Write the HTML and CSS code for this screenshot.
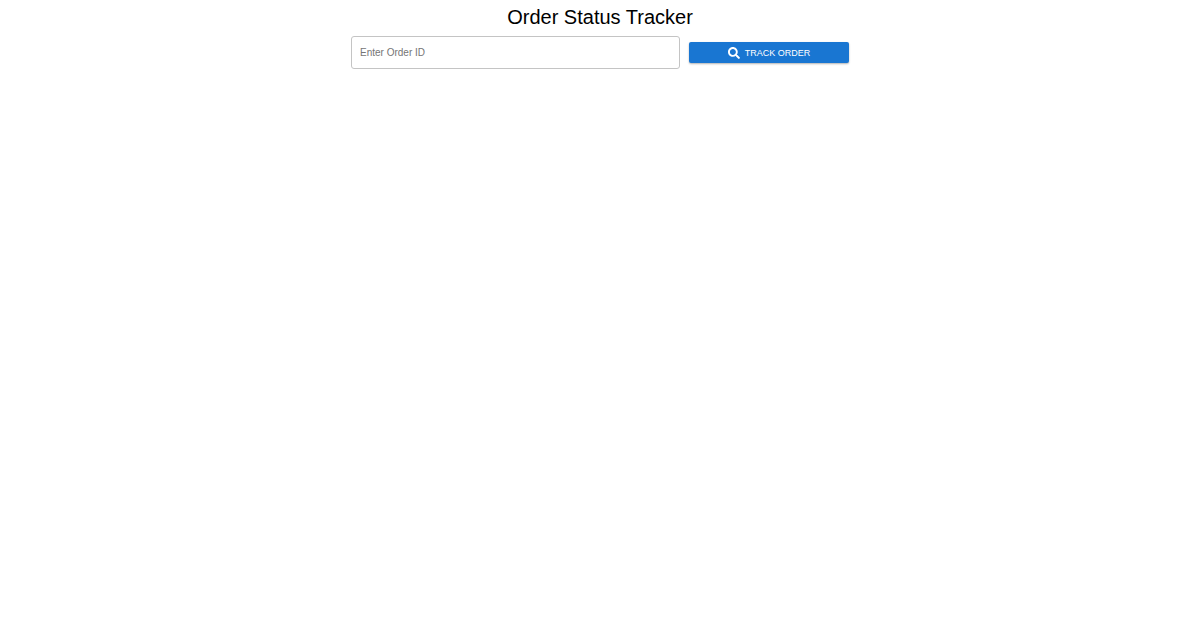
FILE: index.html
```html
<!DOCTYPE html>
<html lang="en">
<head>
<meta charset="utf-8">
<meta name="viewport" content="width=device-width, initial-scale=1">
<title>Order Status Tracker</title>
<link rel="stylesheet" href="styles.css">
</head>
<body>
<main class="tracker">
  <h1 class="tracker-title">Order Status Tracker</h1>
  <form class="tracker-form">
    <input class="order-input" type="text" placeholder="Enter Order ID" aria-label="Enter Order ID">
    <button class="track-button" type="button">
      <svg class="track-icon" viewBox="0 0 512 512" aria-hidden="true"><path fill="currentColor" d="M505 442.700L405.300 343c-4.500-4.500-10.600-7-17-7H372c27.600-35.300 44-79.700 44-128C416 93.100 322.900 0 208 0S0 93.100 0 208s93.100 208 208 208c48.300 0 92.700-16.400 128-44v16.300c0 6.400 2.500 12.500 7 17l99.700 99.700c9.400 9.400 24.600 9.400 33.900 0l28.300-28.300c9.400-9.400 9.400-24.600.1-34zM208 336c-70.700 0-128-57.200-128-128 0-70.700 57.200-128 128-128 70.700 0 128 57.200 128 128 0 70.700-57.200 128-128 128z"/></svg>
      <span>TRACK ORDER</span>
    </button>
  </form>
</main>
</body>
</html>
```
FILE: styles.css
```css
* {
  box-sizing: border-box;
}

body {
  margin: 0;
  background: #fff;
  color: #000;
  font-family: "Liberation Sans", Arial, sans-serif;
}

.tracker {
  max-width: 498px;
  margin: 0 auto;
}

.tracker-title {
  margin: 0;
  padding: 4px 0 6px;
  font-size: 20px;
  font-weight: 400;
  line-height: 26px;
  text-align: center;
}

.tracker-form {
  display: grid;
  grid-template-columns: 329fr 160fr;
  align-items: center;
  gap: 9px;
}

.order-input {
  width: 100%;
  height: 33px;
  padding: 0 8px;
  border: 1px solid #c4c4c4;
  border-radius: 3px;
  background: #fff;
  color: #212121;
  font: 10px/14px "Liberation Sans", Arial, sans-serif;
}

.order-input::placeholder {
  color: #757575;
}

.track-button {
  display: flex;
  align-items: center;
  justify-content: center;
  gap: 5px;
  height: 21px;
  padding: 0 10px;
  border: 0;
  border-radius: 2px;
  background: #1976d2;
  color: #fff;
  font: 9px/14px "Liberation Sans", Arial, sans-serif;
  box-shadow: 0 1px 2px rgba(0, 0, 0, 0.3);
}

.track-icon {
  width: 12px;
  height: 12px;
}
```
